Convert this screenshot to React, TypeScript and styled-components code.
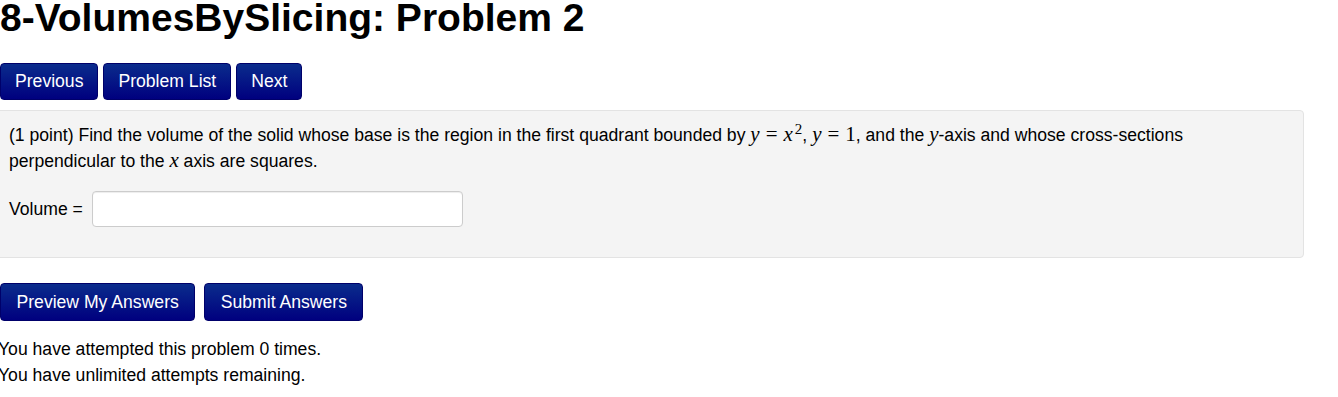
import styled, { createGlobalStyle } from 'styled-components'

const GlobalStyle = createGlobalStyle`
  html, body {
    margin: 0;
    padding: 0;
    background: #ffffff;
  }
  body {
    font-family: "Liberation Sans", Arial, sans-serif;
    color: #000000;
    overflow: hidden;
  }
`

const Page = styled.div`
  width: 1304px;
`

const Title = styled.h1`
  margin: -4px 0 0 0;
  font-size: 39px;
  font-weight: bold;
  line-height: 44px;
`

const ButtonBar = styled.div<{ $gap: number; $top: number }>`
  display: flex;
  gap: ${(p) => p.$gap}px;
  margin-top: ${(p) => p.$top}px;
`

const BlueButton = styled.button<{ $big?: boolean }>`
  font-family: "Liberation Sans", Arial, sans-serif;
  font-size: 17.6px;
  color: #ffffff;
  background: linear-gradient(to bottom, #0a2c8c, #00007f);
  border: 1px solid #00006a;
  border-radius: 4px;
  height: ${(p) => (p.$big ? '38px' : '37px')};
  padding: 0 ${(p) => (p.$big ? '15.5px' : '14px')};
  cursor: pointer;
`

const Well = styled.div`
  margin: 10px 0 0 -10px;
  background: #f4f4f4;
  border: 1px solid #e3e3e3;
  border-radius: 4px;
  padding: 11px 18px 30px 18px;
  font-size: 17.6px;
  line-height: 25px;
`

const Statement = styled.p`
  margin: 0;
`

const M = styled.span`
  font-family: "Liberation Serif", "DejaVu Serif", serif;
  font-style: italic;
  font-size: 21px;
`

const Rel = styled.span`
  font-family: "Liberation Serif", "DejaVu Serif", serif;
  font-size: 21px;
  padding: 0 6px;
`

const Num = styled.span`
  font-family: "Liberation Serif", "DejaVu Serif", serif;
  font-size: 21px;
`

const Sup = styled.sup`
  font-family: "Liberation Serif", "DejaVu Serif", serif;
  font-size: 15px;
  line-height: 0;
  padding-left: 2px;
`

const AnswerRow = styled.div`
  display: flex;
  align-items: center;
  gap: 9px;
  margin-top: 17px;
`

const AnswerInput = styled.input`
  width: 371px;
  height: 36px;
  box-sizing: border-box;
  border: 1px solid #cccccc;
  border-radius: 4px;
  background: #ffffff;
  box-shadow: inset 0 1px 1px rgba(0, 0, 0, 0.075);
`

const Info = styled.div`
  margin: 15px 0 0 -2px;
  font-size: 17.6px;
  line-height: 26px;
`

export default function App() {
  return (
    <>
      <GlobalStyle />
      <Page>
        <Title>8-VolumesBySlicing: Problem 2</Title>
        <ButtonBar $gap={5} $top={23}>
          <BlueButton>Previous</BlueButton>
          <BlueButton>Problem List</BlueButton>
          <BlueButton>Next</BlueButton>
        </ButtonBar>
        <Well>
          <Statement>
            (1 point) Find the volume of the solid whose base is the region in the first quadrant bounded by{' '}
            <M>y</M>
            <Rel>=</Rel>
            <M>x</M>
            <Sup>2</Sup>, <M>y</M>
            <Rel>=</Rel>
            <Num>1</Num>, and the <M>y</M>-axis and whose cross-sections perpendicular to the <M>x</M> axis are
            squares.
          </Statement>
          <AnswerRow>
            <span>Volume =</span>
            <AnswerInput type="text" />
          </AnswerRow>
        </Well>
        <ButtonBar $gap={9} $top={25}>
          <BlueButton $big>Preview My Answers</BlueButton>
          <BlueButton $big>Submit Answers</BlueButton>
        </ButtonBar>
        <Info>
          <div>You have attempted this problem 0 times.</div>
          <div>You have unlimited attempts remaining.</div>
        </Info>
      </Page>
    </>
  )
}
